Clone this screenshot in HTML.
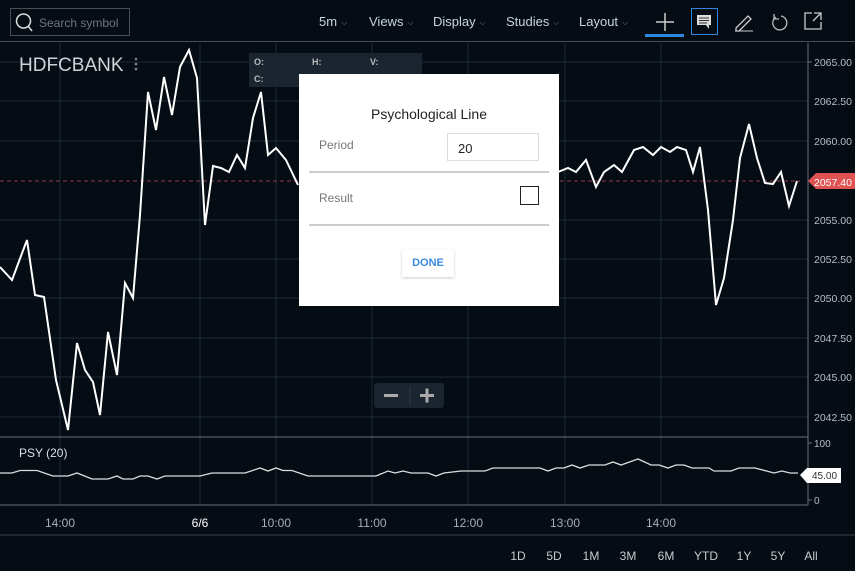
<!DOCTYPE html>
<html><head><meta charset="utf-8"><style>
*{margin:0;padding:0;box-sizing:border-box}
body{width:855px;height:571px;background:#050c14;font-family:"Liberation Sans",sans-serif;color:#c8ccd0;overflow:hidden;position:relative}
.top{position:absolute;left:0;top:0;width:855px;height:42px;border-bottom:1px solid #4a4f55}
.search{position:absolute;left:10px;top:8px;width:120px;height:28px;border:1px solid #4a4f55;font-size:12px;color:#70767c;padding:7px 0 0 28px}
.menu{position:absolute;top:14px;font-size:13px;color:#c8d4e0}
.menu span{font-size:8px;color:#7a8088;margin-left:4px;position:relative;top:-1px}
.abs{position:absolute}
.dlg{position:absolute;left:299px;top:74px;width:260px;height:232px;background:#fff;font-family:"Liberation Sans",sans-serif}
</style></head><body>
<div class="top">
 <div class="search">Search symbol</div>
 <svg class="abs" style="left:15px;top:12px" width="20" height="22"><circle cx="8.5" cy="9" r="7" fill="none" stroke="#ddd" stroke-width="1.5"/><line x1="13" y1="14" x2="17" y2="19" stroke="#ddd" stroke-width="1.5"/></svg>
 <div class="menu" style="left:319px">5m<span>&#9013;</span></div>
 <div class="menu" style="left:369px">Views<span>&#9013;</span></div>
 <div class="menu" style="left:433px">Display<span>&#9013;</span></div>
 <div class="menu" style="left:506px">Studies<span>&#9013;</span></div>
 <div class="menu" style="left:579px">Layout<span>&#9013;</span></div>
 <svg class="abs" style="left:645px;top:8px" width="40" height="30"><line x1="20" y1="5" x2="20" y2="23" stroke="#ccc" stroke-width="1.5"/><line x1="11" y1="14" x2="29" y2="14" stroke="#ccc" stroke-width="1.5"/><rect x="0" y="26" width="39" height="3" fill="#2e86de"/></svg>
 <div class="abs" style="left:691px;top:8px;width:27px;height:27px;border:1px solid #2e86de"></div>
 <svg class="abs" style="left:695px;top:13px" width="20" height="18"><path d="M2 2h14v10h-2v4l-3-4H2z" fill="#ddd"/><g stroke="#333" stroke-width="1"><line x1="4" y1="5" x2="14" y2="5"/><line x1="4" y1="7.5" x2="14" y2="7.5"/><line x1="4" y1="10" x2="12" y2="10"/></g></svg>
 <svg class="abs" style="left:733px;top:12px" width="22" height="20"><path d="M3 16l12-12 3 3-12 12H3z" fill="none" stroke="#ccc" stroke-width="1.3"/><line x1="2" y1="19" x2="20" y2="19" stroke="#ccc"/></svg>
 <svg class="abs" style="left:770px;top:12px" width="20" height="20"><path d="M6 5a7 7 0 1 0 5-1" fill="none" stroke="#bbb" stroke-width="1.3"/><path d="M4 2v5h5" fill="none" stroke="#bbb" stroke-width="1.3"/></svg>
 <svg class="abs" style="left:803px;top:11px" width="20" height="20"><path d="M9 2H2v16h16v-7" fill="none" stroke="#ccc" stroke-width="1.3"/><path d="M11 2h7v7M18 2l-8 8" fill="none" stroke="#ccc" stroke-width="1.3"/></svg>
</div>

<svg class="abs" style="left:0;top:0" width="855" height="571">
 <g stroke="#1c2a36" stroke-width="1">
  <line x1="60" y1="43" x2="60" y2="505"/><line x1="200" y1="43" x2="200" y2="505"/><line x1="276" y1="43" x2="276" y2="505"/><line x1="372" y1="43" x2="372" y2="505"/><line x1="468" y1="43" x2="468" y2="505"/><line x1="565" y1="43" x2="565" y2="505"/><line x1="661" y1="43" x2="661" y2="505"/>
  <line x1="0" y1="62" x2="808" y2="62"/><line x1="0" y1="101" x2="808" y2="101"/><line x1="0" y1="141" x2="808" y2="141"/><line x1="0" y1="220" x2="808" y2="220"/><line x1="0" y1="259" x2="808" y2="259"/><line x1="0" y1="298" x2="808" y2="298"/><line x1="0" y1="338" x2="808" y2="338"/><line x1="0" y1="377" x2="808" y2="377"/><line x1="0" y1="417" x2="808" y2="417"/>
 </g>
 <line x1="0" y1="181" x2="800" y2="181" stroke="#8a4040" stroke-dasharray="4,3"/>
 <line x1="808" y1="43" x2="808" y2="505" stroke="#6a7078"/>
 <line x1="0" y1="437" x2="808" y2="437" stroke="#6a7078"/>
 <line x1="0" y1="505" x2="808" y2="505" stroke="#6a7078"/>
 <line x1="0" y1="535" x2="855" y2="535" stroke="#3a4048"/>
 <polyline fill="none" stroke="#fff" stroke-width="2" points="0,267 12,280 27,240 35,295 44,297 56,380 68,430 77,343 85,370 93,382 100,415 108,332 117,375 125,283 133,298 140,215 148,92 156,130 164,77 172,115 180,67 189,50 197,78 205,225 213,166 221,168 229,172 237,155 245,168 253,118 261,92 268,155 276,148 286,160 298,185"/>
 <polyline fill="none" stroke="#fff" stroke-width="2" points="558,172 568,168 576,172 586,160 596,187 604,172 614,165 622,172 634,150 643,147 653,155 661,147 670,152 677,147 686,150 693,172 700,147 708,210 716,305 724,278 733,220 740,158 749,124 757,158 765,183 773,184 781,172 789,206 797,181"/>
 <polyline fill="none" stroke="#ddd" stroke-width="1.3" points="0,473 12,473 20,470.5 37,470.5 53,476 68,476 77,473 92,479 108,479 117,476 123,479 133,479 140,476 148,476 157,479 165,476 200,476 212,473 245,473 260,468 268,471 276,468 283,470.5 292,470.5 308,476 376,476 388,471 395,473 403,471 411,473 428,473 436,476 444,473 461,471 485,471 493,468 540,468 548,471 556,468 564,468 572,465 580,468 589,465 605,465 613,462 621,465 638,459 651,465 659,465 668,468 676,465 684,465 692,468 709,468 714,471 731,471 739,468 755,468 774,473 782,471 790,473 798,473"/>
 <g fill="#b8bec4" font-size="10.5" font-family="Liberation Sans">
  <text x="814" y="66">2065.00</text><text x="814" y="105">2062.50</text><text x="814" y="145">2060.00</text><text x="814" y="224">2055.00</text><text x="814" y="263">2052.50</text><text x="814" y="302">2050.00</text><text x="814" y="342">2047.50</text><text x="814" y="381">2045.00</text><text x="814" y="421">2042.50</text>
  <text x="814" y="447" font-size="10">100</text><text x="814" y="504" font-size="10">0</text>
 </g>
 <g stroke="#6a7078"><line x1="808" y1="62" x2="812" y2="62"/><line x1="808" y1="443" x2="812" y2="443"/><line x1="808" y1="500" x2="812" y2="500"/></g>
 <path d="M808 181l8-8h39v16h-39z" fill="#e05252"/>
 <text x="814" y="186" fill="#fff" font-size="10.5" font-family="Liberation Sans">2057.40</text>
 <path d="M800 475l7-7h34v15h-34z" fill="#fff"/>
 <text x="812" y="479" fill="#333" font-size="10" font-family="Liberation Sans">45.00</text>
 <g fill="#a8aeb4" font-size="12" font-family="Liberation Sans" text-anchor="middle">
  <text x="60" y="527">14:00</text><text x="200" y="527" fill="#fff">6/6</text><text x="276" y="527">10:00</text><text x="372" y="527">11:00</text><text x="468" y="527">12:00</text><text x="565" y="527">13:00</text><text x="661" y="527">14:00</text>
 </g>
 <g fill="#c8ccd0" font-size="12" font-family="Liberation Sans" text-anchor="middle">
  <text x="518" y="560">1D</text><text x="554" y="560">5D</text><text x="591" y="560">1M</text><text x="628" y="560">3M</text><text x="666" y="560">6M</text><text x="706" y="560">YTD</text><text x="744" y="560">1Y</text><text x="778" y="560">5Y</text><text x="811" y="560">All</text>
 </g>
 <text x="19" y="457" fill="#dde" font-size="12" font-family="Liberation Sans">PSY (20)</text>
 <text x="19" y="71" fill="#d0d4d8" font-size="19" font-family="Liberation Sans">HDFCBANK</text>
 <g fill="#888"><circle cx="136" cy="59" r="1.3"/><circle cx="136" cy="64" r="1.3"/><circle cx="136" cy="69" r="1.3"/></g>
 <rect x="249" y="53" width="173" height="34" fill="#1a2530"/>
 <g fill="#bbb" font-size="9" font-weight="bold" font-family="Liberation Sans"><text x="254" y="65">O:</text><text x="312" y="65">H:</text><text x="370" y="65">V:</text><text x="254" y="82">C:</text></g>
 <rect x="374" y="383" width="70" height="25" rx="3" fill="#1a2530"/>
 <rect x="384" y="394" width="14" height="3" fill="#aaa"/>
 <line x1="410" y1="387" x2="410" y2="404" stroke="#333c44"/>
 <rect x="420" y="394" width="14" height="3" fill="#aaa"/><rect x="425.5" y="388.5" width="3" height="14" fill="#aaa"/>
</svg>

<div class="dlg">
 <div class="abs" style="left:0;top:32px;width:260px;text-align:center;font-size:14px;color:#222">Psychological Line</div>
 <div class="abs" style="left:20px;top:64px;font-size:12px;color:#777">Period</div>
 <div class="abs" style="left:148px;top:59px;width:92px;height:28px;border:1px solid #ddd;font-size:13px;color:#222;padding:7px 0 0 10px">20</div>
 <div class="abs" style="left:10px;top:97px;width:240px;height:2px;background:#ccc"></div>
 <div class="abs" style="left:20px;top:117px;font-size:12px;color:#777">Result</div>
 <div class="abs" style="left:221px;top:112px;width:19px;height:19px;border:1px solid #222"></div>
 <div class="abs" style="left:10px;top:150px;width:240px;height:2px;background:#ccc"></div>
 <div class="abs" style="left:103px;top:176px;width:52px;height:27px;box-shadow:0 1px 3px rgba(0,0,0,.2);font-size:11px;font-weight:bold;color:#3a8be0;text-align:center;line-height:27px">DONE</div>
</div>
</body></html>
